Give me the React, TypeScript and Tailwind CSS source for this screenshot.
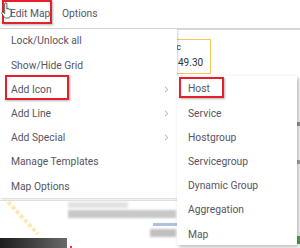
import React from "react";

const Chevron = () => (
  <svg width="5" height="7" viewBox="0 0 5 7" className="shrink-0">
    <polyline points="1,0.8 3.8,3.5 1,6.2" fill="none" stroke="#a8a8a8" strokeWidth="1" />
  </svg>
);

const HandCursor = () => (
  <svg width="11" height="17" viewBox="0 0 12 18" className="absolute left-[1px] top-[2px]">
    <path
      d="M4 1.8a1.2 1.2 0 0 1 2.4 0V7.5h.3a1.1 1.1 0 0 1 2.2.3v.4a1.1 1.1 0 0 1 2.1.5V13c0 2.5-1.8 4.3-4.2 4.3H6.2c-1.6 0-2.6-.8-3.4-2L1 12.5c-.5-.8-.2-1.6.5-1.8.6-.2 1.2.1 1.6.7L4 12.5Z"
      fill="#ffffff"
      stroke="#3a3a3a"
      strokeWidth="0.9"
    />
  </svg>
);

const leftItems: { label: string; arrow?: boolean; mark?: boolean }[] = [
  { label: "Lock/Unlock all" },
  { label: "Show/Hide Grid" },
  { label: "Add Icon", arrow: true, mark: true },
  { label: "Add Line", arrow: true },
  { label: "Add Special", arrow: true },
  { label: "Manage Templates" },
  { label: "Map Options" },
];

const subItems = ["Host", "Service", "Hostgroup", "Servicegroup", "Dynamic Group", "Aggregation", "Map"];

export default function App() {
  return (
    <div
      className="relative w-[300px] h-[248px] overflow-hidden bg-white text-[10.3px] text-[#58555e]"
      style={{ fontFamily: "Roboto, 'Noto Sans', Arial, sans-serif" }}
    >
      {/* top menu bar */}
      <div className="flex items-center h-[28px]">
        <div className="self-start flex items-center whitespace-nowrap ml-[2px] w-[50px] h-[24px] pt-[3px] pl-[6px] border-2 border-[#e5202b] shadow-[1px_1px_2px_rgba(0,0,0,0.3)]">
          Edit Map
        </div>
        <div className="ml-[10px]">Options</div>
      </div>

      {/* map canvas */}
      <div className="relative h-[220px] border-t-2 border-[#d6d6d6]">
        {/* host box */}
        <div className="absolute left-[140px] top-[9px] w-[71px] h-[35px] border border-[#f3c55a]" />
        <div className="absolute right-[119px] top-[11px] text-[9px] text-[#333]">Load:c</div>
        <div className="absolute left-[178px] top-[27px] text-[10px] leading-[12px] text-[#333]">49.30</div>

        {/* lower blurred map content */}
        <div className="absolute left-0 top-[170px] w-[178px] h-[1px] bg-[#e2e2e2]" />
        <svg className="absolute left-0 top-[170px]" width="60" height="40">
          <line x1="8" y1="2" x2="38" y2="34" stroke="#fde9b4" strokeWidth="4" strokeDasharray="4 2" />
        </svg>
        <div className="absolute left-[68px] top-[172px] w-[60px] h-[6px] bg-[#e2e2e2] blur-[1px]" />
        <div className="absolute left-[68px] top-[180px] w-[108px] h-[8px] bg-[#c8c8c8] blur-[1px]" />
        <div className="absolute left-[153px] top-[193px] w-[24px] h-[3px] bg-[#a9c2e6] blur-[0.5px]" />
        <div className="absolute left-[150px] top-[199px] w-[26px] h-[8px] bg-[#c0c0c0] blur-[1px]" />
        <div className="absolute left-0 top-[208px] w-[67px] h-[12px] bg-gradient-to-r from-[#1e1e1e] to-[#6a6a6a]" />
        <div className="absolute left-[70px] top-[216px] w-[2px] h-[2px] bg-[#e33]" />
        <div className="absolute left-[297px] top-[92px] w-[3px] h-[4px] bg-[#999]" />
        <div className="absolute left-[297px] top-[130px] w-[3px] h-[4px] bg-[#aaa]" />
        <div className="absolute left-[297px] top-[206px] w-[3px] h-[8px] bg-[#4caf50]" />
      </div>

      {/* hand cursor */}
      <HandCursor />

      {/* Edit Map dropdown */}
      <div className="absolute left-0 top-[29px] w-[177px] bg-white shadow-[1px_1px_2px_rgba(0,0,0,0.18)]">
        {leftItems.map((it) => (
          <div key={it.label} className="relative flex items-center justify-between h-[24.2px] pl-[11px] pr-[8px]">
            <span>{it.label}</span>
            {it.arrow && <Chevron />}
            {it.mark && (
              <div className="absolute left-[5px] top-[-2px] w-[64px] h-[25px] border-2 border-[#e5202b] shadow-[1px_1px_2px_rgba(0,0,0,0.3)]" />
            )}
          </div>
        ))}
      </div>

      {/* Add Icon submenu */}
      <div className="absolute left-[177px] top-[76px] w-[120px] h-[169px] pt-[1px] bg-white shadow-[2px_2px_4px_rgba(0,0,0,0.28)]">
        {subItems.map((s, i) => (
          <div key={s} className="relative flex items-center h-[24.2px] pl-[11px]">
            {s}
            {i === 0 && (
              <div className="absolute left-[2px] top-0 w-[45px] h-[21px] border-2 border-[#e5202b] shadow-[1px_1px_2px_rgba(0,0,0,0.3)]" />
            )}
          </div>
        ))}
      </div>
    </div>
  );
}
